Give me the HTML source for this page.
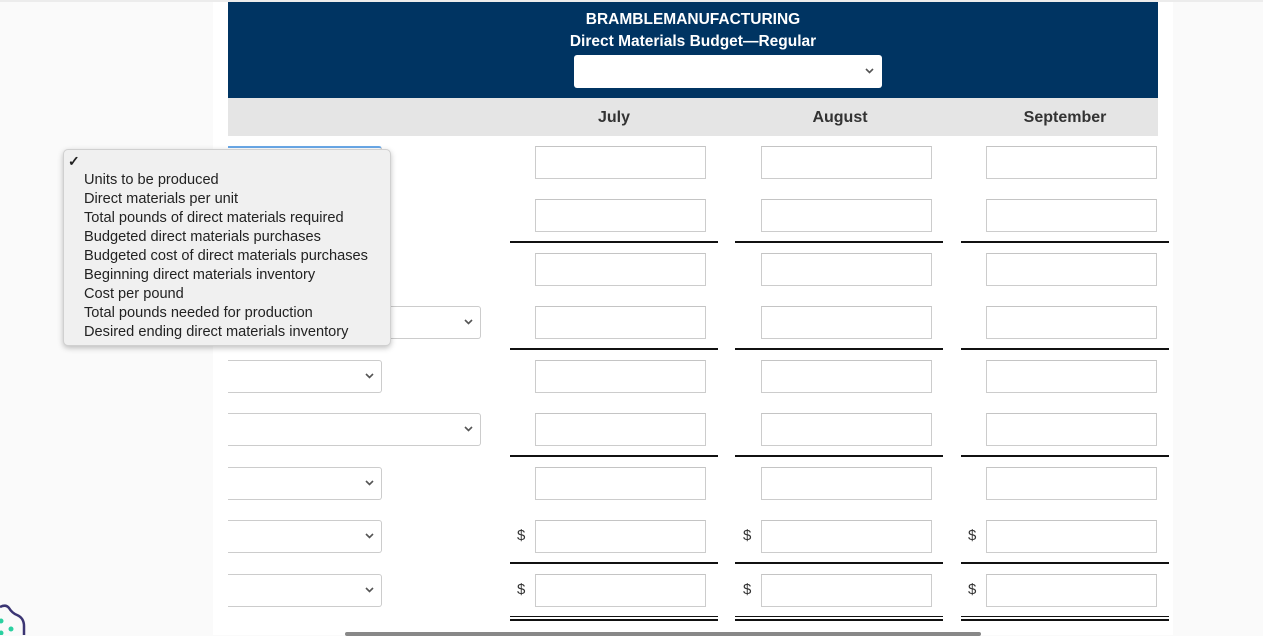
<!DOCTYPE html>
<html><head><meta charset="utf-8"><style>
*{margin:0;padding:0;box-sizing:border-box}
body{width:1263px;height:635px;background:#fafafa;position:relative;overflow:hidden;font-family:"Liberation Sans",sans-serif;}
.a{position:absolute}
.inp{position:absolute;width:171px;height:33px;background:#fff;border:1px solid #ccc;border-top-color:#c4c4c4}
.sel{position:absolute;height:33px;background:#fff;border:1px solid #ccc;border-left:none;border-radius:0 3px 3px 0}
.sel svg{position:absolute;right:7px;top:12px}
.ln{position:absolute;height:2px;background:#111;width:208px}
.dol{position:absolute;font-size:15px;color:#333}
.hd{position:absolute;top:109px;font-size:16px;font-weight:bold;color:#333;text-align:center;width:200px}
.dd div{height:19px;line-height:19px;font-size:14.6px;color:#222;padding-left:20px}
</style></head><body>
<div class="a" style="left:213px;top:0;width:960px;height:635px;background:#fff"></div>
<div class="a" style="left:0;top:0;width:1263px;height:2px;background:#ececec"></div>
<div class="a" style="left:228px;top:2px;width:930px;height:96px;background:#003462"></div>
<div class="a" style="left:228px;top:9px;width:930px;text-align:center;color:#fff;font-size:15.5px;font-weight:bold;line-height:22px">BRAMBLEMANUFACTURING<br>Direct Materials Budget—Regular</div>
<div class="a" style="left:574px;top:55px;width:308px;height:33px;background:#fff;border-radius:3px"><svg class="a" style="right:8px;top:13px" width="9" height="6" viewBox="0 0 9 6"><path d="M1 1l3.5 3.5L8 1" stroke="#555" stroke-width="1.6" fill="none"/></svg></div>
<div class="a" style="left:228px;top:98px;width:930px;height:38px;background:#e5e5e5"></div>
<div class="hd" style="left:514px">July</div>
<div class="hd" style="left:740px">August</div>
<div class="hd" style="left:965px">September</div>

<div class="inp" style="left:535px;top:146px"></div><div class="inp" style="left:761px;top:146px"></div><div class="inp" style="left:986px;top:146px"></div>
<div class="inp" style="left:535px;top:199px"></div><div class="inp" style="left:761px;top:199px"></div><div class="inp" style="left:986px;top:199px"></div>
<div class="inp" style="left:535px;top:253px"></div><div class="inp" style="left:761px;top:253px"></div><div class="inp" style="left:986px;top:253px"></div>
<div class="inp" style="left:535px;top:306px"></div><div class="inp" style="left:761px;top:306px"></div><div class="inp" style="left:986px;top:306px"></div>
<div class="inp" style="left:535px;top:360px"></div><div class="inp" style="left:761px;top:360px"></div><div class="inp" style="left:986px;top:360px"></div>
<div class="inp" style="left:535px;top:413px"></div><div class="inp" style="left:761px;top:413px"></div><div class="inp" style="left:986px;top:413px"></div>
<div class="inp" style="left:535px;top:467px"></div><div class="inp" style="left:761px;top:467px"></div><div class="inp" style="left:986px;top:467px"></div>
<div class="inp" style="left:535px;top:520px"></div><div class="inp" style="left:761px;top:520px"></div><div class="inp" style="left:986px;top:520px"></div>
<div class="inp" style="left:535px;top:574px"></div><div class="inp" style="left:761px;top:574px"></div><div class="inp" style="left:986px;top:574px"></div>

<div class="ln" style="left:510px;top:241px"></div><div class="ln" style="left:735px;top:241px"></div><div class="ln" style="left:961px;top:241px"></div>
<div class="ln" style="left:510px;top:348px"></div><div class="ln" style="left:735px;top:348px"></div><div class="ln" style="left:961px;top:348px"></div>
<div class="ln" style="left:510px;top:455px"></div><div class="ln" style="left:735px;top:455px"></div><div class="ln" style="left:961px;top:455px"></div>
<div class="ln" style="left:510px;top:562px"></div><div class="ln" style="left:735px;top:562px"></div><div class="ln" style="left:961px;top:562px"></div>
<div class="ln" style="left:510px;top:616px;height:1px"></div><div class="ln" style="left:735px;top:616px;height:1px"></div><div class="ln" style="left:961px;top:616px;height:1px"></div>
<div class="ln" style="left:510px;top:619px;height:2px"></div><div class="ln" style="left:735px;top:619px;height:2px"></div><div class="ln" style="left:961px;top:619px;height:2px"></div>

<div class="dol" style="left:517px;top:527px">$</div><div class="dol" style="left:743px;top:527px">$</div><div class="dol" style="left:968px;top:527px">$</div>
<div class="dol" style="left:517px;top:581px">$</div><div class="dol" style="left:743px;top:581px">$</div><div class="dol" style="left:968px;top:581px">$</div>

<div class="sel" style="left:228px;top:146px;width:154px;border-top:2px solid #6aa8e8"></div>
<div class="sel" style="left:228px;top:306px;width:253px"><svg width="9" height="6" viewBox="0 0 9 6"><path d="M1 1l3.5 3.5L8 1" stroke="#555" stroke-width="1.6" fill="none"/></svg></div>
<div class="sel" style="left:228px;top:360px;width:154px"><svg width="9" height="6" viewBox="0 0 9 6"><path d="M1 1l3.5 3.5L8 1" stroke="#555" stroke-width="1.6" fill="none"/></svg></div>
<div class="sel" style="left:228px;top:413px;width:253px"><svg width="9" height="6" viewBox="0 0 9 6"><path d="M1 1l3.5 3.5L8 1" stroke="#555" stroke-width="1.6" fill="none"/></svg></div>
<div class="sel" style="left:228px;top:467px;width:154px"><svg width="9" height="6" viewBox="0 0 9 6"><path d="M1 1l3.5 3.5L8 1" stroke="#555" stroke-width="1.6" fill="none"/></svg></div>
<div class="sel" style="left:228px;top:520px;width:154px"><svg width="9" height="6" viewBox="0 0 9 6"><path d="M1 1l3.5 3.5L8 1" stroke="#555" stroke-width="1.6" fill="none"/></svg></div>
<div class="sel" style="left:228px;top:574px;width:154px"><svg width="9" height="6" viewBox="0 0 9 6"><path d="M1 1l3.5 3.5L8 1" stroke="#555" stroke-width="1.6" fill="none"/></svg></div>

<div class="a dd" style="left:63px;top:149px;width:328px;height:197px;background:#f0f0f0;border-radius:5px;border:1px solid #d0d0d0;box-shadow:0 2px 6px rgba(0,0,0,.25);padding-top:2px">
<div style="padding-left:4px;font-size:14px;font-weight:bold">✓</div>
<div>Units to be produced</div>
<div>Direct materials per unit</div>
<div>Total pounds of direct materials required</div>
<div>Budgeted direct materials purchases</div>
<div>Budgeted cost of direct materials purchases</div>
<div>Beginning direct materials inventory</div>
<div>Cost per pound</div>
<div>Total pounds needed for production</div>
<div>Desired ending direct materials inventory</div>
</div>

<div class="a" style="left:345px;top:632px;width:636px;height:4px;background:#888;border-radius:2px"></div>
<svg class="a" style="left:0;top:604px" width="30" height="31" viewBox="0 0 30 31"><path d="M0 3 Q6 0 9 4 Q12 9 17 11 Q24 14 24 22 L24 31" stroke="#3b3573" stroke-width="2.5" fill="none"/><circle cx="1" cy="17" r="2.5" fill="#2bd0a0"/><circle cx="11" cy="25" r="2.5" fill="#2bd0a0"/><circle cx="1" cy="29" r="2.5" fill="#2bd0a0"/></svg>
</body></html>
